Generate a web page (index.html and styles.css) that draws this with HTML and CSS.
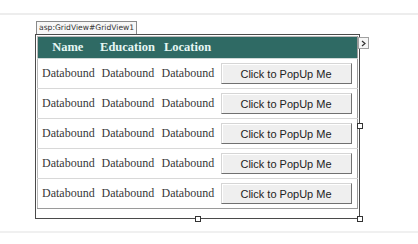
FILE: index.html
```html
<!DOCTYPE html>
<html>
<head>
<meta charset="utf-8">
<link rel="stylesheet" href="styles.css">
</head>
<body>
<div class="page">
  <div class="rule-top"></div>
  <div class="designer">
    <div class="tag">asp:GridView#GridView1</div>
    <div class="frame">
      <table class="grid">
        <colgroup>
          <col class="c-data"><col class="c-data"><col class="c-data"><col class="c-btn">
        </colgroup>
        <thead>
          <tr class="head">
            <th>Name</th><th>Education</th><th>Location</th><th></th>
          </tr>
        </thead>
        <tbody>
          <tr><td>Databound</td><td>Databound</td><td>Databound</td><td class="btn-cell"><button class="btn">Click to PopUp Me</button></td></tr>
          <tr><td>Databound</td><td>Databound</td><td>Databound</td><td class="btn-cell"><button class="btn">Click to PopUp Me</button></td></tr>
          <tr><td>Databound</td><td>Databound</td><td>Databound</td><td class="btn-cell"><button class="btn">Click to PopUp Me</button></td></tr>
          <tr><td>Databound</td><td>Databound</td><td>Databound</td><td class="btn-cell"><button class="btn">Click to PopUp Me</button></td></tr>
          <tr><td>Databound</td><td>Databound</td><td>Databound</td><td class="btn-cell"><button class="btn">Click to PopUp Me</button></td></tr>
        </tbody>
      </table>
      <div class="smart-tag"><svg width="7" height="7" viewBox="0 0 7 7"><path d="M2 1 L5 3.5 L2 6" fill="none" stroke="#333" stroke-width="1.2"/></svg></div>
      <div class="handle h-right"></div>
      <div class="handle h-bottom"></div>
      <div class="handle h-corner"></div>
    </div>
  </div>
  <div class="rule-bottom"></div>
</div>
</body>
</html>
```
FILE: styles.css
```css
html, body {
  margin: 0;
  padding: 0;
  background: #ffffff;
}
.page {
  padding-top: 13px;
  width: 418px;
  height: 244px;
  box-sizing: border-box;
}
.rule-top {
  border-top: 2px solid #ededed;
  margin-bottom: 6px;
}
.designer {
  margin-left: 35px;
  width: 325px;
}
.tag {
  display: block;
  width: fit-content;
  margin-left: 1px;
  font-family: "DejaVu Sans", "Liberation Sans", sans-serif;
  font-size: 7.6px;
  line-height: 12px;
  height: 12px;
  color: #333;
  background: #f7f7f7;
  border: 1px solid #8a8a8a;
  border-bottom: none;
  padding: 0 2px;
}
.frame {
  position: relative;
  width: 325px;
  height: 185px;
  box-sizing: border-box;
  border: 1px solid #4a4a4a;
  padding: 1px 2px 2px 1px;
}
.grid {
  border-collapse: collapse;
  width: 320px;
  table-layout: fixed;
  border: 1px solid #b9b9b9;
  border-right-color: #9a9a9a;
  border-bottom-color: #9a9a9a;
}
.c-data { width: 60px; }
.c-btn { width: 140px; }
.head {
  background: #2f6a64;
  height: 22px;
}
.head th {
  font-family: "Liberation Serif", "Times New Roman", serif;
  font-size: 12.5px;
  font-weight: bold;
  color: #e6f7f4;
  text-align: center;
  padding: 0;
  border-bottom: 1px solid #cfd8d6;
}
.grid td {
  height: 29px;
  padding: 0 0 0 4px;
  font-family: "Liberation Serif", "Times New Roman", serif;
  font-size: 12px;
  color: #383838;
  white-space: nowrap;
  border-top: 1px solid #d8d8d8;
}
.grid tbody tr:first-child td {
  border-top: 1px solid #e6e6e6;
}
.grid td.btn-cell {
  padding: 0 0 0 3px;
}
.btn {
  display: block;
  width: 131px;
  height: 21px;
  margin: 0;
  padding: 0;
  font-family: "Liberation Sans", Arial, sans-serif;
  font-size: 11px;
  color: #222;
  background: #efefef;
  border: 1px solid;
  border-color: #d6d6d6 #707070 #707070 #d6d6d6;
  box-shadow: inset 1px 1px 0 #ffffff;
}
.smart-tag {
  position: absolute;
  right: -10px;
  top: 2px;
  width: 9px;
  height: 10px;
  border: 1px solid #a0a0a0;
  background: #f6f6f6;
  display: flex;
  align-items: center;
  justify-content: center;
}
.handle {
  position: absolute;
  width: 4px;
  height: 4px;
  background: #fff;
  border: 1px solid #333;
}
.h-right { right: -4px; top: 88px; }
.h-bottom { left: 159px; bottom: -4px; }
.h-corner { right: -4px; bottom: -4px; }
.rule-bottom {
  margin-top: 12px;
  border-top: 2px solid #f0f0f0;
}
```
